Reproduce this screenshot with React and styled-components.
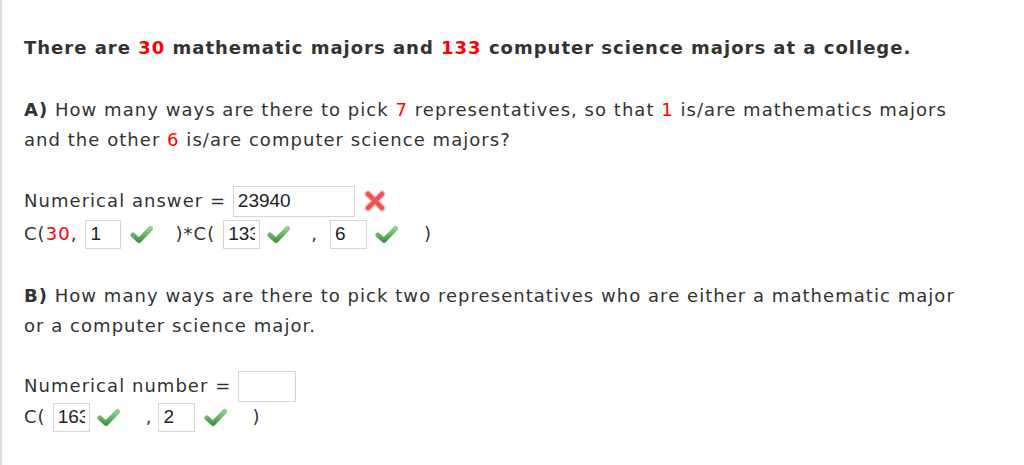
import React from "react";
import styled, { createGlobalStyle } from "styled-components";

const GlobalStyle = createGlobalStyle`
  html, body {
    margin: 0;
    padding: 0;
    background: #fff;
  }
`;

const Page = styled.div`
  width: 1024px;
  height: 465px;
  box-sizing: border-box;
  border-left: 2px solid #dcdcdc;
  padding: 33px 0 0 22px;
  font-family: "DejaVu Sans", Verdana, sans-serif;
  font-size: 18px;
  letter-spacing: 1.04px;
  line-height: 30px;
  color: #333;
  overflow: hidden;
`;

const Title = styled.p`
  margin: 0;
  font-weight: bold;
  letter-spacing: 1px;
`;

const Section = styled.div`
  margin-top: ${(p) => p.$top || 32}px;
`;

const Text = styled.p`
  margin: 0;
`;

const Red = styled.span`
  color: #f00;
`;

const Bold = styled.b`
  font-weight: bold;
  letter-spacing: 1px;
`;

const Row = styled.div`
  display: flex;
  align-items: center;
  height: ${(p) => p.$h || 30}px;
  margin-top: ${(p) => p.$top || 0}px;
  white-space: pre;
`;

const Piece = styled.span`
  margin-left: ${(p) => p.$ml || 0}px;
`;

const Field = styled.input`
  box-sizing: border-box;
  width: ${(p) => p.$w}px;
  height: ${(p) => p.$h || 29}px;
  margin-left: ${(p) => p.$ml || 0}px;
  padding: 0 4px;
  border: 1px solid #d6d6d6;
  background: #fff;
  font-family: "Liberation Sans", Arial, sans-serif;
  font-size: 19px;
  letter-spacing: 0;
  color: #222;
  outline: none;
`;

const Icon = styled.svg`
  flex: none;
  margin-left: ${(p) => p.$ml || 0}px;
`;

const Check = ({ ml }) => (
  <Icon $ml={ml} width="23" height="20" viewBox="0 0 23 20">
    <defs>
      <linearGradient id="ck" x1="0" y1="0" x2="0" y2="1">
        <stop offset="0" stopColor="#8fd08a" />
        <stop offset="1" stopColor="#3f9a43" />
      </linearGradient>
    </defs>
    <path
      d="M3 11 L9 16.5 L20.5 4.5"
      fill="none"
      stroke="url(#ck)"
      strokeWidth="5"
      strokeLinecap="round"
      strokeLinejoin="round"
    />
  </Icon>
);

const Cross = ({ ml }) => (
  <Icon $ml={ml} width="22" height="22" viewBox="0 0 22 22">
    <g stroke="#f48080" strokeWidth="7" strokeLinecap="round" opacity="0.5">
      <path d="M4 4 L18 18 M18 4 L4 18" />
    </g>
    <g stroke="#f05252" strokeWidth="4.5" strokeLinecap="round">
      <path d="M4 4 L18 18 M18 4 L4 18" />
    </g>
  </Icon>
);

export default function App() {
  return (
    <>
      <GlobalStyle />
      <Page>
        <Title>
          There are <Red>30</Red> mathematic majors and <Red>133</Red> computer
          science majors at a college.
        </Title>

        <Section>
          <Text>
            <Bold>A)</Bold> How many ways are there to pick <Red>7</Red>{" "}
            representatives, so that <Red>1</Red> is/are mathematics majors
            <br />
            and the other <Red>6</Red> is/are computer science majors?
          </Text>
        </Section>

        <Section $top={31}>
          <Row>
            <Piece>Numerical answer = </Piece>
            <Field $w={122} $h={31} readOnly value="23940" />
            <Cross ml={9} />
          </Row>
          <Row $top={3}>
            <Piece>
              C(<Red>30</Red>,
            </Piece>
            <Field $w={36} $ml={8} readOnly value="1" />
            <Check ml={9} />
            <Piece $ml={22}>)*C(</Piece>
            <Field $w={37} $ml={8} readOnly value="133" />
            <Check ml={7} />
            <Piece $ml={21}>,</Piece>
            <Field $w={37} $ml={12} readOnly value="6" />
            <Check ml={8} />
            <Piece $ml={26}>)</Piece>
          </Row>
        </Section>

        <Section>
          <Text>
            <Bold>B)</Bold> How many ways are there to pick two representatives
            who are either a mathematic major
            <br />
            or a computer science major.
          </Text>
        </Section>

        <Section $top={30}>
          <Row>
            <Piece>Numerical number = </Piece>
            <Field $w={58} $h={31} readOnly value="" />
          </Row>
          <Row $top={1}>
            <Piece>C(</Piece>
            <Field $w={37} $ml={7} readOnly value="163" />
            <Check ml={7} />
            <Piece $ml={26}>,</Piece>
            <Field $w={37} $ml={6} readOnly value="2" />
            <Check ml={9} />
            <Piece $ml={25}>)</Piece>
          </Row>
        </Section>
      </Page>
    </>
  );
}
